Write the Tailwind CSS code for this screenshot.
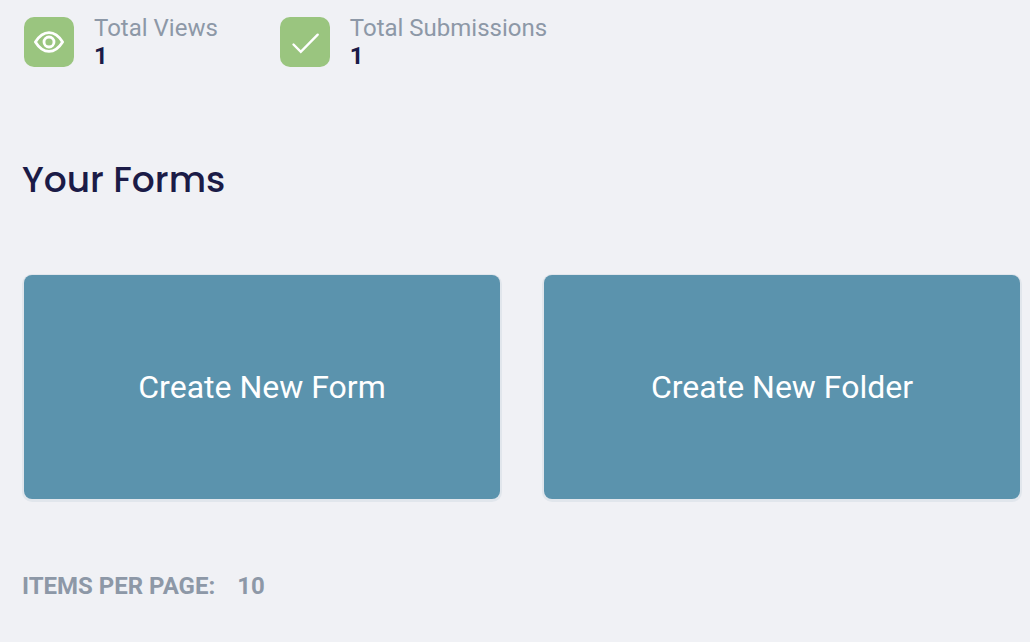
<!DOCTYPE html>
<html lang="en">
<head>
    <meta charset="UTF-8">
    <meta name="viewport" content="width=device-width, initial-scale=1.0">
    <title>Your Forms</title>
    <script src="https://cdn.jsdelivr.net/npm/@tailwindcss/browser@4"></script>
</head>
<body class="bg-[#f0f1f5] font-['Roboto',sans-serif] text-[#1b1b47]">

    <main class="pl-6 pr-[10px] pt-[14px]">
        <!-- Stats -->
        <dl class="flex gap-[62px]">
            <div class="flex gap-5">
                <div class="mt-[3px] flex size-[50px] shrink-0 items-center justify-center rounded-[10px] bg-[#9ac57f]">
                    <svg class="h-6 w-8" viewBox="0 0 32 24" fill="none" stroke="#fff" stroke-width="2.8" stroke-linejoin="round" aria-hidden="true">
                        <path d="M2.4 12C5.5 7 10 2.6 16 2.6S26.500 7 29.600 12C26.500 17 22 21.400 16 21.400S5.500 17 2.400 12Z"/>
                        <circle cx="16" cy="12" r="5"/>
                    </svg>
                </div>
                <div class="text-2xl leading-7">
                    <dt class="text-[#8d98a7]">Total Views</dt>
                    <dd class="font-bold">1</dd>
                </div>
            </div>
            <div class="flex gap-5">
                <div class="mt-[3px] flex size-[50px] shrink-0 items-center justify-center rounded-[10px] bg-[#9ac57f]">
                    <svg class="h-6 w-8" viewBox="0 0 32 24" fill="none" stroke="#fff" stroke-width="2.4" stroke-linecap="round" stroke-linejoin="miter" aria-hidden="true">
                        <path d="M4.5 14.500L11.800 21.800L28.700 4.700"/>
                    </svg>
                </div>
                <div class="text-2xl leading-7">
                    <dt class="text-[#8d98a7]">Total Submissions</dt>
                    <dd class="font-bold">1</dd>
                </div>
            </div>
        </dl>

        <h1 class="-ml-0.5 mt-[86px] font-['Poppins','Inter',sans-serif] text-4xl font-medium leading-12">Your Forms</h1>

        <!-- Actions -->
        <div class="mt-[71px] grid grid-cols-2 gap-11">
            <button type="button" class="h-56 rounded-lg bg-[#5b93ad] text-[32px] text-white shadow-[0_1px_0_2px_#e1e6ec]">Create New Form</button>
            <button type="button" class="h-56 rounded-lg bg-[#5b93ad] text-[32px] text-white shadow-[0_1px_0_2px_#e1e6ec]">Create New Folder</button>
        </div>

        <!-- Pagination -->
        <div class="-ml-0.5 mt-[73px] flex items-center gap-[22px] text-2xl font-bold leading-7 text-[#8d98a7]">
            <label for="per-page">ITEMS PER PAGE:</label>
            <select id="per-page" class="appearance-none bg-transparent">
                <option selected>10</option>
                <option>20</option>
                <option>50</option>
            </select>
        </div>
    </main>

</body>
</html>
